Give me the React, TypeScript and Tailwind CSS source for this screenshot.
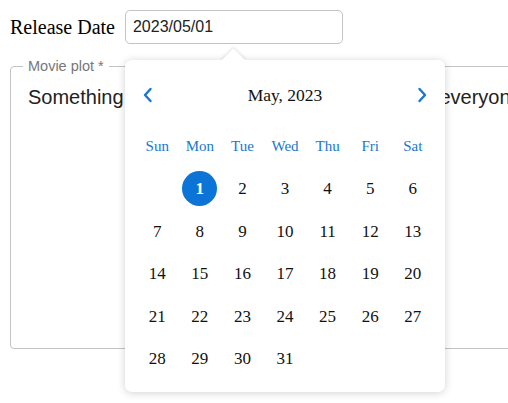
import React from "react";

const weekdays = ["Sun", "Mon", "Tue", "Wed", "Thu", "Fri", "Sat"];

function Chevron({ dir }: { dir: "left" | "right" }) {
  return (
    <svg width="12" height="16" viewBox="0 0 12 16" fill="none">
      <polyline
        points={dir === "left" ? "8.5,2 3,8 8.5,14" : "3.5,2 9,8 3.5,14"}
        stroke="#1976d2"
        strokeWidth="2.4"
        strokeLinecap="round"
        strokeLinejoin="round"
      />
    </svg>
  );
}

export default function App() {
  // May 2023 starts on a Monday
  const cells: (number | null)[] = [null];
  for (let d = 1; d <= 31; d++) cells.push(d);
  const selected = 1;

  return (
    <div className="relative w-[508px] h-[403px] overflow-hidden bg-white">
      <div className="flex items-center gap-[10px] pl-[10px] pt-[10px]">
        <label className="text-[20px] text-black font-['Liberation_Serif',serif]">Release Date</label>
        <input
          readOnly
          value="2023/05/01"
          className="w-[218px] h-[34px] border border-[#c4c4c4] rounded-[5px] px-[7px] text-[16px] text-[#222] font-['Liberation_Sans',Arial,sans-serif] outline-none"
        />
      </div>

      <fieldset className="ml-[10px] mt-[14px] w-[560px] h-[291px] border border-[#c4c4c4] rounded-[4px]">
        <legend className="ml-[12px] px-[5px] text-[14.5px] leading-[17px] text-[#777] font-['Liberation_Sans',Arial,sans-serif]">
          Movie plot *
        </legend>
        <div className="pl-[17px] pt-[7px] text-[20px] text-[#222] whitespace-nowrap font-['Liberation_Sans',Arial,sans-serif]">
          Something strange happens in the village and everyone
        </div>
      </fieldset>

      {/* date picker popover */}
      <div className="absolute left-[125px] top-[60px] w-[320px] h-[332px]">
        <div className="absolute left-[100px] top-[-8px] w-[17px] h-[17px] rotate-45 bg-white shadow-[-1px_-1px_3px_rgba(0,0,0,0.12)]" />
        <div className="relative w-full h-full bg-white rounded-[7px] shadow-[0_1px_8px_rgba(0,0,0,0.18)] pt-[16px] px-[11px] font-['Liberation_Serif',serif]">
          <div className="absolute left-[100px] top-[-8px] w-[17px] h-[17px] rotate-45 bg-white" />
          <div className="relative flex items-center justify-between h-[38px] px-[6px]">
            <Chevron dir="left" />
            <span className="text-[17.5px] text-[#111]">May, 2023</span>
            <Chevron dir="right" />
          </div>
          <div className="grid grid-cols-7 mt-[11px]">
            {weekdays.map((w) => (
              <div key={w} className="h-[42.5px] flex items-center justify-center text-[15px] text-[#1976d2]">
                {w}
              </div>
            ))}
            {cells.map((d, i) => (
              <div key={i} className="h-[42.5px] flex items-center justify-center">
                {d === selected ? (
                  <span className="w-[35px] h-[35px] rounded-full bg-[#0b74d6] text-white text-[17px] font-bold flex items-center justify-center">
                    {d}
                  </span>
                ) : (
                  <span className="text-[17px] text-[#111]">{d ?? ""}</span>
                )}
              </div>
            ))}
          </div>
        </div>
      </div>
    </div>
  );
}
